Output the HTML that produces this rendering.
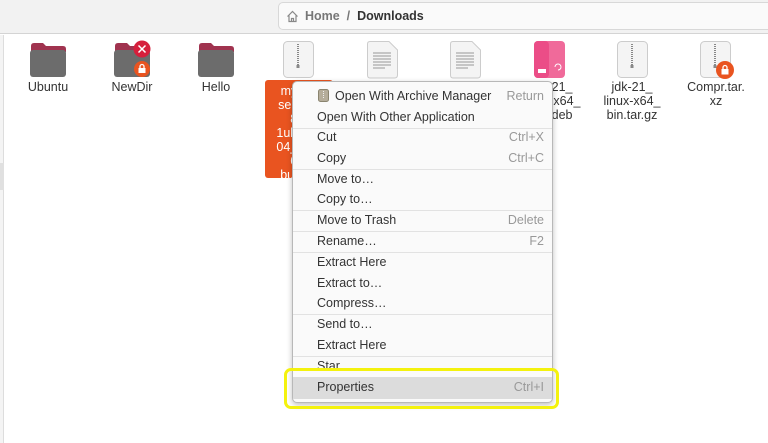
<!DOCTYPE html>
<html><head><meta charset="utf-8"><style>
*{margin:0;padding:0;box-sizing:border-box}
body{width:768px;height:443px;overflow:hidden;background:#fff;font-family:"Liberation Sans","DejaVu Sans",sans-serif;position:relative;color:#333}
.hdr{position:absolute;left:0;top:0;width:768px;height:34px;background:#f2f2f2;border-bottom:1px solid #d4d4d4}
.crumb{position:absolute;left:278px;top:2px;width:500px;height:28px;background:#fafafa;border:1px solid #d8d8d8;border-radius:5px;font-size:12.5px;font-weight:bold;line-height:26px;padding-left:26px;color:#777}
.crumb b{color:#333}
.side{position:absolute;left:0;top:35px;width:4px;height:408px;background:#f4f4f4;border-right:1px solid #ddd}
.lbl{position:absolute;font-size:12.5px;text-align:center;line-height:14px;color:#333;width:90px}
.ico{position:absolute}
.sel{position:absolute;left:265px;top:80px;width:68px;height:98px;background:#e95420;border-radius:3px;color:#fff;font-size:12.5px;line-height:14px;text-align:center;padding-top:4px}
.menu{position:absolute;left:292px;top:81px;width:261px;height:322px;background:#fafafa;border:1px solid #b8b8b8;border-radius:5px;box-shadow:0 2px 6px rgba(0,0,0,.25);font-size:12.5px;z-index:5;overflow:hidden}
.it{position:absolute;left:0;width:259px;height:21px;line-height:21px;padding-left:24px;color:#333}
.it span{position:absolute;right:8px;color:#999}
.sep{position:absolute;left:0;width:259px;height:1px;background:#e2e2e2}
.hl{position:absolute;left:284px;top:368px;width:275px;height:41px;border:3px solid #f4f20e;border-radius:7px;z-index:6}
</style></head><body>
<div class="hdr"><div class="crumb">
<svg style="position:absolute;left:7px;top:7px" width="13" height="13" viewBox="0 0 13 13"><path d="M1.5 6.5L6.5 1.5L11.5 6.5M3 5.5V11.5H10V5.5M5.5 11.5V8.5H7.5V11.5" fill="none" stroke="#888" stroke-width="1.2"/></svg>
Home &nbsp;/&nbsp; <b>Downloads</b></div></div>
<div class="side"></div>
<div style="position:absolute;left:0;top:163px;width:4px;height:27px;background:#e0e0e0"></div>

<svg class="ico" style="left:29px;top:42px" width="38" height="36"><path d="M2 4Q2 1 5 1H14L17 4H34Q37 4 37 7V10H2Z" fill="#a0334f"/><rect x="1" y="8" width="36" height="27" rx="3" fill="#6c6c6c"/></svg>
<svg class="ico" style="left:113px;top:42px" width="38" height="36"><path d="M2 4Q2 1 5 1H14L17 4H34Q37 4 37 7V10H2Z" fill="#a0334f"/><rect x="1" y="8" width="36" height="27" rx="3" fill="#6c6c6c"/></svg>
<svg class="ico" style="left:197px;top:42px" width="38" height="36"><path d="M2 4Q2 1 5 1H14L17 4H34Q37 4 37 7V10H2Z" fill="#a0334f"/><rect x="1" y="8" width="36" height="27" rx="3" fill="#6c6c6c"/></svg>
<svg class="ico" style="left:133px;top:40px" width="20" height="40"><circle cx="9" cy="9" r="8.5" fill="#d61f3c"/><path d="M5.5 5.5L12.5 12.5M12.5 5.5L5.5 12.5" stroke="#fff" stroke-width="1.5"/><circle cx="9" cy="29" r="8" fill="#e95420"/><rect x="5.5" y="28" width="7" height="5" fill="#fff"/><path d="M7 28V26.5a2 2 0 0 1 4 0V28" fill="none" stroke="#fff" stroke-width="1.3"/></svg>
<div class="lbl" style="left:3px;top:80px">Ubuntu</div>
<div class="lbl" style="left:87px;top:80px">NewDir</div>
<div class="lbl" style="left:171px;top:80px">Hello</div>

<svg class="ico" style="left:283px;top:41px" width="32" height="38"><rect x="0.5" y="0.5" width="30" height="36" rx="4" fill="#f4f4f4" stroke="#ccc"/><path d="M15 3V24" stroke="#888" stroke-width="2" stroke-dasharray="1 1"/><rect x="13.5" y="24" width="3" height="3" fill="#888"/></svg>
<svg class="ico" style="left:367px;top:41px" width="32" height="38"><path d="M3 .5H22L30.5 9V34Q30.5 37 27.5 37H3Q.5 37 .5 34V3Q.5 .5 3 .5Z" fill="#f4f4f4" stroke="#ccc"/><path d="M6 12H24M6 15H24M6 18H24M6 21H24M6 24H24M6 27H18" stroke="#999"/></svg>
<svg class="ico" style="left:450px;top:41px" width="32" height="38"><path d="M3 .5H22L30.5 9V34Q30.5 37 27.5 37H3Q.5 37 .5 34V3Q.5 .5 3 .5Z" fill="#f4f4f4" stroke="#ccc"/><path d="M6 12H24M6 15H24M6 18H24M6 21H24M6 24H24M6 27H18" stroke="#999"/></svg>
<svg class="ico" style="left:534px;top:41px" width="32" height="38"><rect x="0" y="0" width="31" height="37" rx="4" fill="#f06a9a"/><rect x="0" y="0" width="15" height="37" rx="4" fill="#eb4d87"/><rect x="4" y="28" width="8" height="4" fill="#fff"/><path d="M21 26a3 3 0 1 1 3 3" fill="none" stroke="#fff"/></svg>
<svg class="ico" style="left:617px;top:41px" width="32" height="38"><rect x="0.5" y="0.5" width="30" height="36" rx="4" fill="#f4f4f4" stroke="#ccc"/><path d="M15 3V24" stroke="#888" stroke-width="2" stroke-dasharray="1 1"/><rect x="13.5" y="24" width="3" height="3" fill="#888"/></svg>
<svg class="ico" style="left:700px;top:41px" width="36" height="40"><rect x="0.5" y="0.5" width="30" height="36" rx="4" fill="#f4f4f4" stroke="#ccc"/><path d="M15 3V24" stroke="#888" stroke-width="2" stroke-dasharray="1 1"/><rect x="13.5" y="24" width="3" height="3" fill="#888"/><circle cx="25" cy="29" r="9" fill="#e95420"/><rect x="21.5" y="28" width="7" height="5.5" fill="#fff"/><path d="M23 28V26.5a2 2 0 0 1 4 0V28" fill="none" stroke="#fff" stroke-width="1.3"/></svg>
<div class="lbl" style="left:507px;top:80px">jdk-21_<br>linux-x64_<br>bin.deb</div>
<div class="lbl" style="left:587px;top:80px">jdk-21_<br>linux-x64_<br>bin.tar.gz</div>
<div class="lbl" style="left:671px;top:80px">Compr.tar.<br>xz</div>
<div class="sel">mysql-<br>server_<br>8.0<br>1ubuntu<br>04_amd<br>64.<br>bundle</div>

<div class="menu">
<svg style="position:absolute;left:25px;top:7px" width="11" height="13"><rect x=".5" y=".5" width="10" height="12" rx="2" fill="#b5ad9a" stroke="#8a846f"/><path d="M5.5 2V9" stroke="#eee" stroke-dasharray="1 1"/></svg>
<div class="it" style="top:4px;padding-left:42px">Open With Archive Manager<span>Return</span></div>
<div class="it" style="top:25px">Open With Other Application</div>
<div class="sep" style="top:46px"></div>
<div class="it" style="top:45px">Cut<span>Ctrl+X</span></div>
<div class="it" style="top:66px">Copy<span>Ctrl+C</span></div>
<div class="sep" style="top:87px"></div>
<div class="it" style="top:87px">Move to…</div>
<div class="it" style="top:107px">Copy to…</div>
<div class="sep" style="top:128px"></div>
<div class="it" style="top:128px">Move to Trash<span>Delete</span></div>
<div class="sep" style="top:149px"></div>
<div class="it" style="top:149px">Rename…<span>F2</span></div>
<div class="sep" style="top:170px"></div>
<div class="it" style="top:170px">Extract Here</div>
<div class="it" style="top:191px">Extract to…</div>
<div class="it" style="top:211px">Compress…</div>
<div class="sep" style="top:232px"></div>
<div class="it" style="top:232px">Send to…</div>
<div class="it" style="top:253px">Extract Here</div>
<div class="sep" style="top:274px"></div>
<div class="it" style="top:274px">Star</div>
<div class="it" style="top:295px;background:#dcdcdc;height:22px">Properties<span>Ctrl+I</span></div>
</div>
<div class="hl"></div>
</body></html>
